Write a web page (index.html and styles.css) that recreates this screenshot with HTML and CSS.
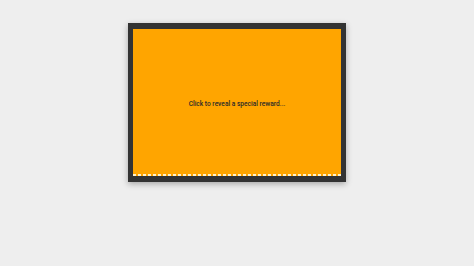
FILE: index.html
```html
<!DOCTYPE html>
<html>
<head>
<meta charset="utf-8">
<link rel="stylesheet" href="styles.css">
</head>
<body>
<div class="stage">
  <div class="frame">
    <div class="card">
      <span class="label">Click to reveal a special reward...</span>
    </div>
  </div>
</div>
</body>
</html>
```
FILE: styles.css
```css
html, body {
  margin: 0;
  padding: 0;
  background: #eeeeee;
  width: 474px;
  height: 266px;
  overflow: hidden;
}
.stage {
  display: flex;
  justify-content: center;
  padding-top: 23px;
}
.frame {
  width: 208px;
  padding: 6px 5px;
  background: #333333;
  box-shadow: 0 2px 6px rgba(0, 0, 0, 0.3);
}
.card {
  box-sizing: border-box;
  height: 147px;
  padding-top: 3px;
  background:
    repeating-linear-gradient(90deg, #fff2cc 0 3px, transparent 3px 5px) left bottom / 100% 2px no-repeat,
    #ffa500;
  display: flex;
  align-items: center;
  justify-content: center;
}
.label {
  font-family: Roboto, "Liberation Sans", sans-serif;
  font-size: 6.6px;
  font-weight: 500;
  color: #2a2a2a;
}
```
